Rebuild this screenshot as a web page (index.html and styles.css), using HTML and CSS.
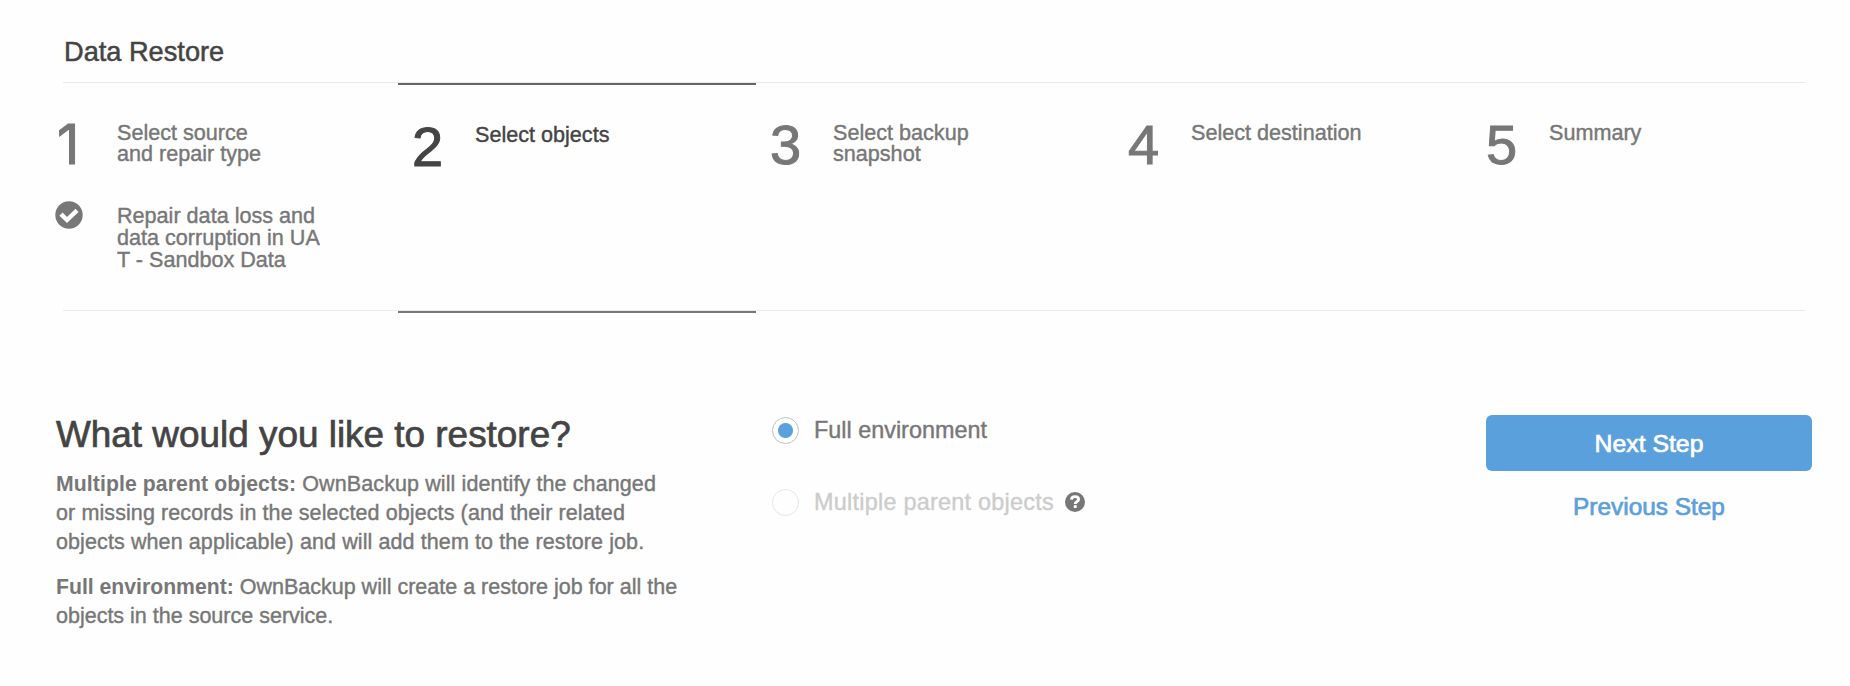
FILE: index.html
```html
<!DOCTYPE html>
<html lang="en">
<head>
    <meta charset="utf-8">
    <title>Data Restore</title>
    <link rel="stylesheet" href="styles.css">
</head>
<body>
    <h1 class="title">Data Restore</h1>

    <!-- Wizard steps -->
    <div class="steps">
        <div class="step">
            <div class="step-head">
                <span class="number one">1</span>
                <span class="label">Select source<br>and repair type</span>
            </div>
            <div class="step-info">
                <svg class="check" viewBox="0 0 28 28">
                    <circle cx="14" cy="14" r="13.7" fill="#777"/>
                    <path d="M6 13.2L12 19L22 9.4" fill="none" stroke="#fff" stroke-width="4.4"/>
                </svg>
                <span class="info">Repair data loss and<br>data corruption in UA<br>T - Sandbox Data</span>
            </div>
        </div>
        <div class="step active">
            <div class="step-head">
                <span class="number">2</span>
                <span class="label">Select objects</span>
            </div>
        </div>
        <div class="step">
            <div class="step-head">
                <span class="number">3</span>
                <span class="label">Select backup<br>snapshot</span>
            </div>
        </div>
        <div class="step">
            <div class="step-head">
                <span class="number">4</span>
                <span class="label">Select destination</span>
            </div>
        </div>
        <div class="step">
            <div class="step-head">
                <span class="number">5</span>
                <span class="label">Summary</span>
            </div>
        </div>
    </div>

    <div class="content">
        <div class="description">
            <h2>What would you like to restore?</h2>
            <p class="wide"><b>Multiple parent objects:</b> OwnBackup will identify the changed<br>or missing records in the selected objects (and their related<br>objects when applicable) and will add them to the restore job.</p>
            <p><b>Full environment:</b> OwnBackup will create a restore job for all the<br>objects in the source service.</p>
        </div>

        <div class="options">
            <label class="option">
                <input type="radio" name="scope" checked>
                <span>Full environment</span>
            </label>
            <label class="option disabled">
                <input type="radio" name="scope" disabled>
                <span>Multiple parent objects</span>
                <svg class="help" viewBox="0 0 20 20">
                    <circle cx="10" cy="10" r="10" fill="#777"/>
                    <path d="M6.4 7.6C6.6 5.4 8.1 4.6 10 4.6C12.2 4.6 13.6 5.6 13.6 7.4C13.6 9.6 10.2 9.4 10.2 12" fill="none" stroke="#fff" stroke-width="2.8"/>
                    <rect x="8.8" y="13.2" width="2.9" height="2.8" fill="#fff"/>
                </svg>
            </label>
        </div>

        <div class="actions">
            <button class="next">Next Step</button>
            <a class="previous">Previous Step</a>
        </div>
    </div>
</body>
</html>
```
FILE: styles.css
```css
* {
    box-sizing: border-box;
}

body {
    margin: 0;
    padding: 34px 0 0 40px;
    width: 1850px;
    height: 686px;
    overflow: hidden;
    background: #fefefe;
    color: #777;
    font-family: "Liberation Sans", Arial, sans-serif;
}

.title {
    margin: 0 45px 0 23px;
    height: 49px;
    border-bottom: 1px solid #e8e8e8;
    color: #444;
    font-size: 27.2px;
    font-weight: normal;
    line-height: 35px;
    text-indent: 1px;
    -webkit-text-stroke: 0.5px;
}

.steps {
    display: grid;
    grid-template-columns: repeat(5, 358px);
    height: 230px;
    background: linear-gradient(#eaeaea, #eaeaea) 23px 227px / 1742px 1px no-repeat;
}

.step {
    padding: 36px 0 0 14px;
    -webkit-text-stroke: 0.4px;
}

.step.active {
    border-top: 2px solid #666;
    border-bottom: 2px solid #777;
    color: #444;
}

.step-head {
    display: flex;
    height: 80px;
}

.number {
    width: 63px;
    font-size: 56px;
    line-height: 51px;
    -webkit-text-stroke: 1px;
}

/* numeral without a foot */
.number.one {
    padding-left: 3px;
    font-family: Inter, sans-serif;
    font-size: 55px;
}

.label {
    font-size: 21.6px;
    line-height: 21px;
    padding-top: 2.5px;
}

.step-info {
    display: flex;
}

.check {
    width: 28px;
    height: 28px;
    margin: 2px 34px 0 1px;
}

.info {
    width: 203px;
    padding-top: 6px;
    overflow: hidden;
    white-space: nowrap;
    font-size: 21.6px;
    line-height: 22px;
}

.content {
    display: grid;
    grid-template-columns: 715px 716px 326px;
    padding: 101px 0 0 15px;
}

.description {
    padding: 1px 0 0 1px;
    -webkit-text-stroke: 0.4px;
}

.description h2 {
    margin: 0 0 14px;
    color: #444;
    font-size: 36.9px;
    font-weight: normal;
    line-height: 40px;
    -webkit-text-stroke: 0.7px;
}

.description p {
    margin: 0 0 15px;
    font-size: 21.5px;
    line-height: 29px;
    white-space: nowrap;
}

.description p.wide {
    letter-spacing: 0.1px;
}

.description b {
    font-size: 21.2px;
    -webkit-text-stroke: 0;
}

.option {
    display: flex;
    align-items: center;
    height: 32px;
    margin-bottom: 40px;
    font-size: 23.4px;
    -webkit-text-stroke: 0.4px;
}

.option input {
    appearance: none;
    width: 27px;
    height: 27px;
    margin: 0 15px 0 2px;
    border: 1.5px solid #b4c3cd;
    border-radius: 50%;
}

.option input:checked {
    background: radial-gradient(circle, #5aa0dc 7px, #fff 8px);
}

.option.disabled {
    color: #ccc;
    letter-spacing: 0.26px;
}

.option.disabled input {
    border-color: #e6e6e6;
}

.help {
    width: 20px;
    height: 20px;
    margin-left: 11px;
}

.actions {
    display: flex;
    flex-direction: column;
    align-items: center;
    padding-top: 1px;
}

.next {
    width: 326px;
    height: 56px;
    padding-top: 2px;
    border: none;
    border-radius: 6px;
    background: #5aa0dc;
    color: #fff;
    font: 24.8px "Liberation Sans", Arial, sans-serif;
    -webkit-text-stroke: 0.7px;
}

.previous {
    margin-top: 21px;
    color: #5aa0dc;
    font-size: 24.4px;
    line-height: 30px;
    -webkit-text-stroke: 0.7px;
}
```
